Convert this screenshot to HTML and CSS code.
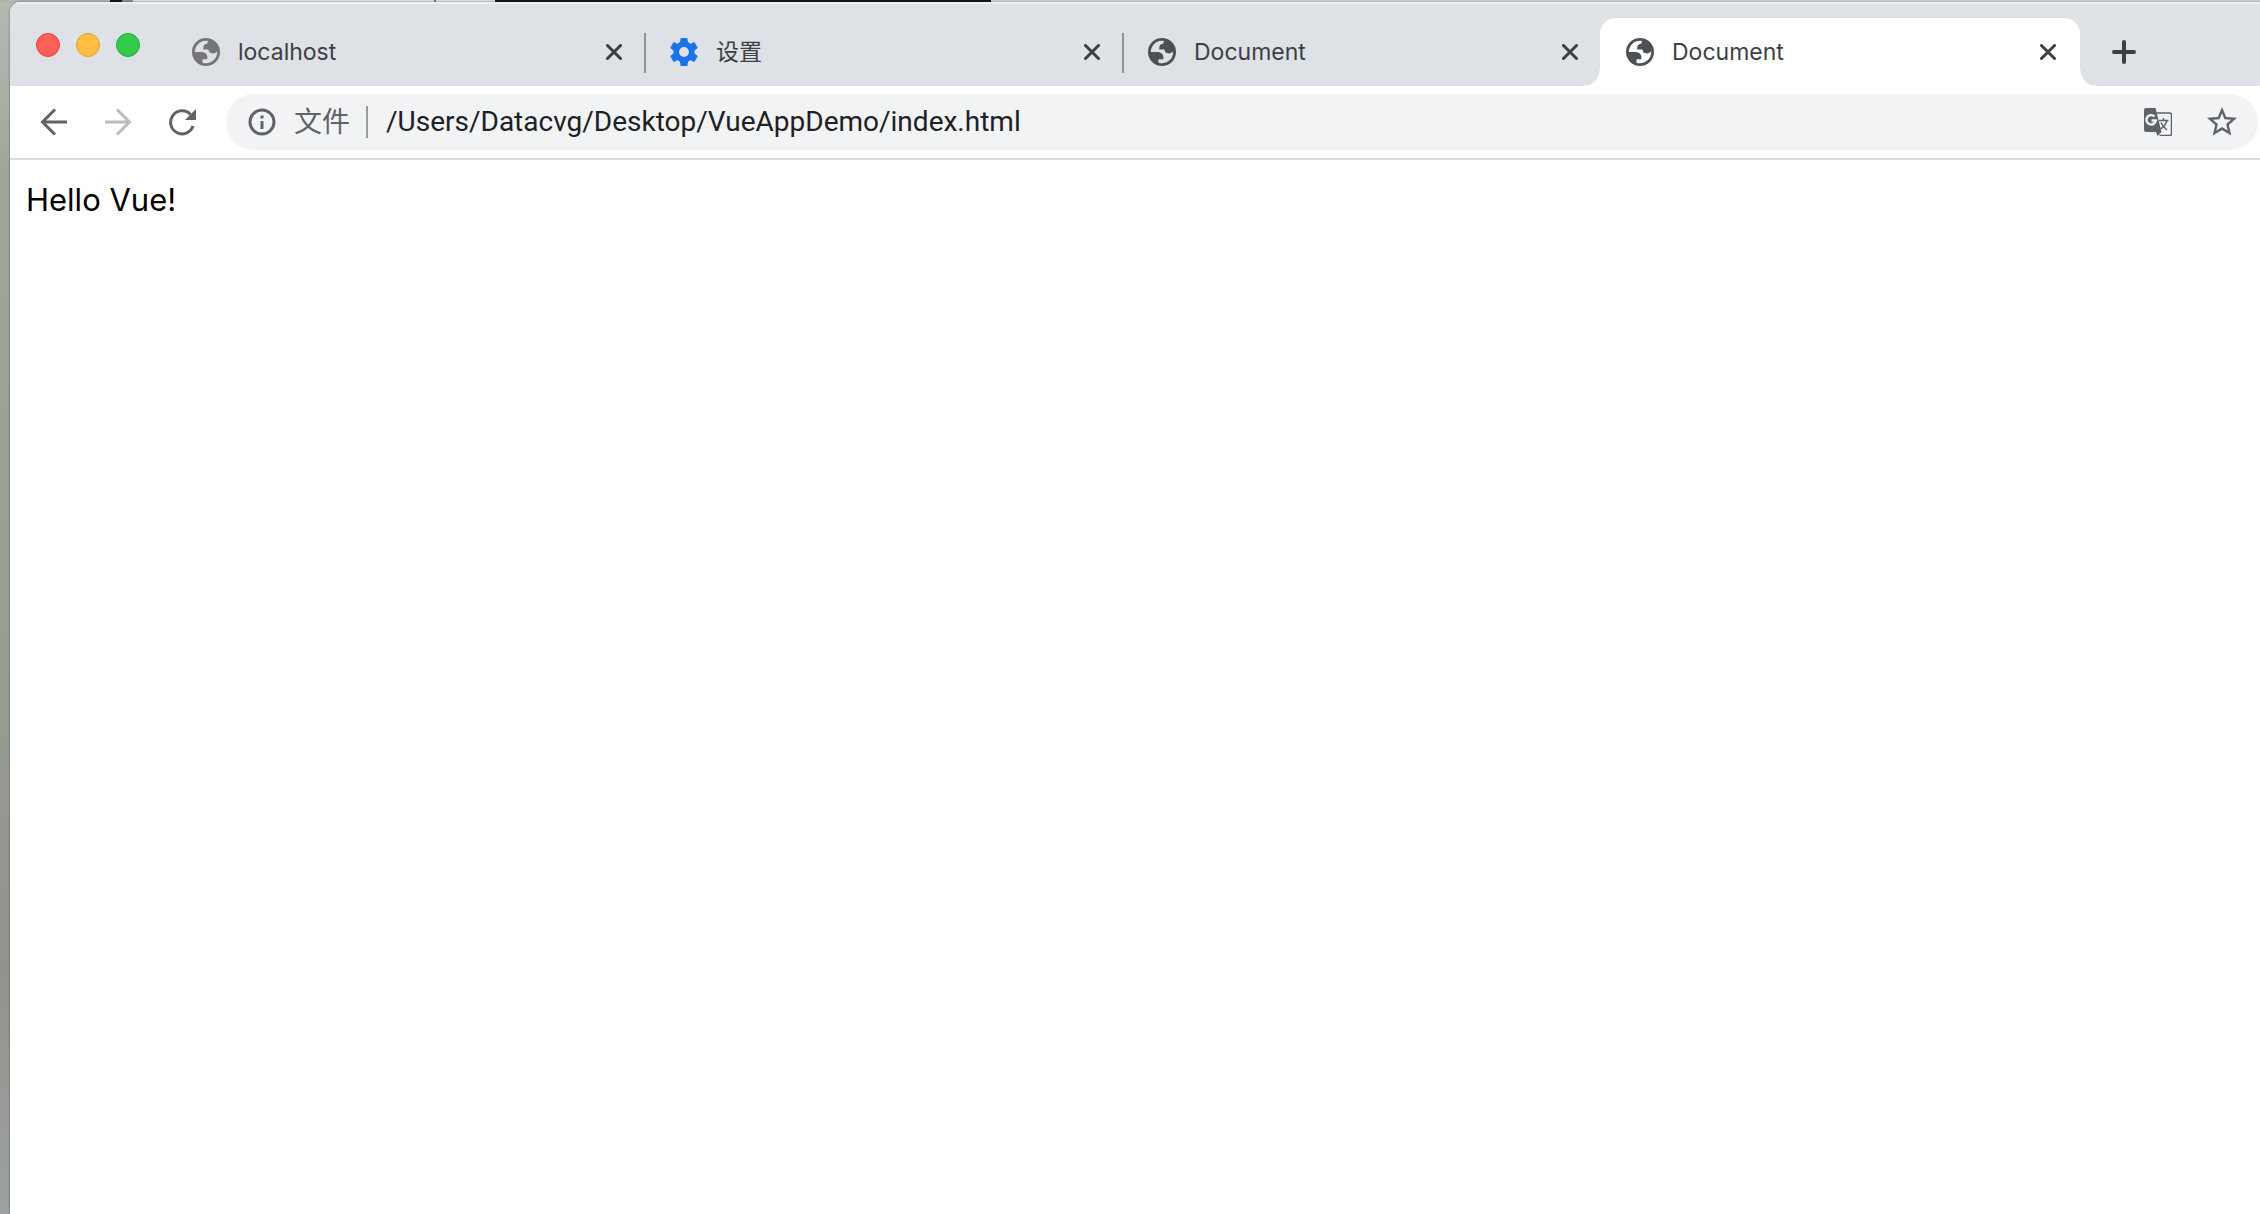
FILE: index.html
```html
<!DOCTYPE html>
<html lang="zh-CN">
<head>
  <meta charset="UTF-8">
  <meta name="viewport" content="width=device-width, initial-scale=1.0">
  <title>Document</title>
  <link rel="stylesheet" href="styles.css">
</head>
<body>

  <!-- shared icon shapes -->
  <svg class="sprite" aria-hidden="true">
    <symbol id="globe" viewBox="2 2 20 20">
      <path fill="currentColor" fill-rule="evenodd" d="M12 2a10 10 0 1 0 0 20 10 10 0 0 0 0-20zM4 12h4.400c3.407.022 4.922 1.730 4.543 5.127H9.488v2.470a8.004 8.004 0 0 0 10.498-8.083C19.327 12.504 18.332 13 17 13c-2.137 0-3.206-.916-3.206-2.750h-3.748c-.274-2.728.683-4.092 2.870-4.092 0-.975.327-1.597.811-1.970A8.004 8.004 0 0 0 4 12z"/>
    </symbol>
    <symbol id="close" viewBox="0 0 16 16">
      <path fill="none" stroke="currentColor" stroke-width="3" stroke-linecap="round" d="M1.500 1.500l13 13M14.500 1.500l-13 13"/>
    </symbol>
  </svg>

  <div class="window">
    <header class="tab-bar">
      <div class="controls">
        <button class="dot red" aria-label="关闭"></button>
        <button class="dot yellow" aria-label="最小化"></button>
        <button class="dot green" aria-label="全屏"></button>
      </div>

      <div class="tab">
        <svg class="favicon gray"><use href="#globe"/></svg>
        <span class="title">localhost</span>
        <button class="close" aria-label="关闭标签页"><svg><use href="#close"/></svg></button>
      </div>
      <div class="tab divided">
        <svg class="favicon blue" viewBox="2 2 20 20"><path fill="currentColor" d="M19.430 12.980c.04-.32.07-.64.07-.98s-.03-.66-.07-.98l2.110-1.650c.19-.15.24-.42.12-.64l-2-3.460c-.12-.22-.39-.3-.61-.22l-2.490 1c-.52-.4-1.080-.73-1.690-.98l-.38-2.650A.488.488 0 0 0 14 2h-4c-.25 0-.46.18-.49.42l-.38 2.650c-.61.25-1.170.59-1.690.98l-2.490-1c-.23-.09-.49 0-.61.22l-2 3.460c-.13.22-.07.49.12.64l2.110 1.650c-.04.32-.07.65-.07.98s.03.66.07.98l-2.110 1.650c-.19.15-.24.42-.12.64l2 3.460c.12.22.39.3.61.22l2.490-1c.52.4 1.080.73 1.690.98l.38 2.650c.03.24.24.42.49.42h4c.25 0 .46-.18.49-.42l.38-2.650c.61-.25 1.170-.59 1.690-.98l2.490 1c.23.09.49 0 .61-.22l2-3.460c.12-.22.07-.49-.12-.64l-2.110-1.650zM12 15.500c-1.930 0-3.500-1.570-3.500-3.500s1.570-3.500 3.500-3.500 3.500 1.570 3.500 3.500-1.570 3.500-3.500 3.500z"/></svg>
        <span class="title">设置</span>
        <button class="close" aria-label="关闭标签页"><svg><use href="#close"/></svg></button>
      </div>
      <div class="tab divided">
        <svg class="favicon"><use href="#globe"/></svg>
        <span class="title">Document</span>
        <button class="close" aria-label="关闭标签页"><svg><use href="#close"/></svg></button>
      </div>
      <div class="tab active">
        <svg class="favicon"><use href="#globe"/></svg>
        <span class="title">Document</span>
        <button class="close" aria-label="关闭标签页"><svg><use href="#close"/></svg></button>
      </div>

      <button class="new-tab" aria-label="新标签页">
        <svg viewBox="0 0 24 24"><path fill="none" stroke="currentColor" stroke-width="4" stroke-linecap="round" d="M12 2v20M2 12h20"/></svg>
      </button>
    </header>

    <nav class="toolbar">
      <button class="nav-btn" aria-label="后退">
        <svg viewBox="0 0 28 28"><path d="M27 14H3M15 1.500L2.500 14 15 26.500"/></svg>
      </button>
      <button class="nav-btn" aria-label="前进" disabled>
        <svg viewBox="0 0 28 28"><path d="M1 14h24M13 1.500L25.500 14 13 26.500"/></svg>
      </button>
      <button class="nav-btn" aria-label="重新加载">
        <svg viewBox="0 0 28 28"><path d="M22.500 6.500A11.500 11.500 0 1 0 25 18"/><path class="solid" d="M28 1v11H17z"/></svg>
      </button>

      <div class="address">
        <svg class="info" viewBox="0 0 28 28"><circle cx="14" cy="14" r="12" fill="none" stroke="currentColor" stroke-width="3"/><path fill="currentColor" d="M12.500 7.500h3v3h-3zM12.500 13h3v8h-3z"/></svg>
        <label class="scheme" for="url">文件</label>
        <input id="url" type="text" value="/Users/Datacvg/Desktop/VueAppDemo/index.html" spellcheck="false">
        <button class="action" aria-label="翻译此页">
          <svg viewBox="0 0 28 28">
            <path fill="none" stroke="currentColor" stroke-width="1.500" d="M12 5h13.500a2 2 0 0 1 2 2v18.500a2 2 0 0 1-2 2H15.500"/>
            <path fill="currentColor" d="M2 0h9.500l6 24-4 4-1.500-4H2a2 2 0 0 1-2-2V2a2 2 0 0 1 2-2z"/>
            <path fill="none" stroke="#f1f3f4" stroke-width="2.400" d="M10.500 8.500A4.700 4.700 0 1 0 11.800 12.500H7.500"/>
            <path fill="none" stroke="currentColor" stroke-width="1.500" d="M15 12.500h9.500M19.500 10v2.500M23 12.500c-1 4-3.500 6.500-6.500 8.500M17 14.500c1.500 3.500 3.500 5.500 6 7.500"/>
          </svg>
        </button>
        <button class="action star" aria-label="为此标签页添加书签">
          <svg viewBox="2 2 20 20"><path fill="currentColor" d="M22 9.240l-7.190-.62L12 2 9.190 8.630 2 9.240l5.460 4.730L5.820 21 12 17.270 18.180 21l-1.630-7.030L22 9.240zM12 15.400l-3.760 2.270 1-4.280-3.320-2.880 4.380-.38L12 6.100l1.710 4.040 4.380.38-3.320 2.880 1 4.280L12 15.400z"/></svg>
        </button>
      </div>
    </nav>

    <main id="app">Hello Vue!</main>
  </div>

</body>
</html>
```

FILE: styles.css
```css
* {
  box-sizing: border-box;
}

body {
  font-family: Inter, "Noto Sans CJK SC", sans-serif;
  margin: 0;
  padding: 2px 0 0 10px;
  /* strip of the windows behind, then the wallpaper */
  background:
    linear-gradient(90deg, #b0b3ad 110px, #161616 110px, #161616 122px, #8d8e8d 122px, #8d8e8d 133px, #dededb 133px, #dededb 434px, #777 434px, #777 436px, #dededb 436px, #dededb 495px, #161616 495px, #161616 991px, #d3d3d0 991px) 0 0 / 100% 2px no-repeat,
    linear-gradient(#b5b9b1, #9fa59d 15%, #969b94 60%, #92938e 80%, #9ca19d);
}

button {
  padding: 0;
  border: none;
  background: none;
  color: inherit;
  display: flex;
  align-items: center;
  justify-content: center;
}

.sprite {
  display: none;
}

.window {
  min-height: calc(100vh - 2px);
  background-color: #fff;
  border-top-left-radius: 10px;
  box-shadow: 0 0 2px rgba(0, 0, 0, 0.6);
  overflow: hidden;
}

/* Tabs */
.tab-bar {
  display: flex;
  height: 84px;
  padding-top: 16px;
  background-color: #dee1e6;
  box-shadow: inset 0 2px 1px #eef0f1;
  color: #3c4043;
}

.controls {
  display: flex;
  gap: 16px;
  width: 156px;
  padding: 15px 0 0 26px;
}

.dot {
  width: 24px;
  height: 24px;
  border-radius: 50%;
}

.red {
  background-color: #ff5f5a;
  border: 1px solid #e2463f;
}

.yellow {
  background-color: #ffbe3f;
  border: 1px solid #dfa033;
}

.green {
  background-color: #33cc48;
  border: 1px solid #24ab35;
}

.tab {
  position: relative;
  display: flex;
  align-items: center;
  flex: 0 1 478px;
  padding: 0 12px 0 26px;
}

.divided::before {
  content: "";
  position: absolute;
  left: 0;
  top: 15px;
  width: 2px;
  height: 40px;
  background-color: #8e9195;
}

.active {
  flex-basis: 480px;
  padding-right: 14px;
  background-color: #fff;
  border-radius: 16px 16px 0 0;
}

/* curved feet of the active tab */
.active::before,
.active::after {
  content: "";
  position: absolute;
  bottom: 0;
  width: 16px;
  height: 16px;
}

.active::before {
  right: 100%;
  background: radial-gradient(circle at 0 0, transparent 15px, #fff 16px);
}

.active::after {
  left: 100%;
  background: radial-gradient(circle at 100% 0, transparent 15px, #fff 16px);
}

.favicon {
  width: 28px;
  height: 28px;
  color: #4d5156;
}

.gray {
  color: #757575;
}

.blue {
  color: #1a73e8;
}

.title {
  flex: 1;
  margin-left: 18px;
  font-size: 23px;
  line-height: 32px;
}

.close {
  width: 36px;
  height: 36px;
}

.close svg {
  width: 16px;
  height: 16px;
}

.new-tab {
  width: 56px;
  height: 68px;
  margin-left: 16px;
}

.new-tab svg {
  width: 24px;
  height: 24px;
}

/* Toolbar */
.toolbar {
  display: flex;
  height: 74px;
  padding: 8px 2px 8px 12px;
  border-bottom: 2px solid #dadce0;
  color: #5f6368;
}

.nav-btn {
  width: 64px;
  height: 56px;
}

.nav-btn svg {
  width: 28px;
  height: 28px;
  fill: none;
  stroke: currentColor;
  stroke-width: 3;
}

.nav-btn .solid {
  fill: currentColor;
  stroke: none;
}

.nav-btn:disabled {
  color: #babcbe;
}

.address {
  display: flex;
  flex: 1;
  align-items: center;
  height: 56px;
  margin-left: 12px;
  padding: 0 4px 0 22px;
  background-color: #f1f3f4;
  border-radius: 28px;
}

.info {
  width: 28px;
  height: 28px;
}

.scheme {
  margin-left: 18px;
  padding-right: 16px;
  border-right: 2px solid #9a9da0;
  font-size: 28px;
  line-height: 32px;
}

.address input {
  flex: 1;
  min-width: 0;
  padding: 0 0 0 18px;
  border: none;
  outline: none;
  background: none;
  color: #202124;
  font-family: Roboto, sans-serif;
  font-size: 28px;
  line-height: 36px;
}

.action {
  width: 64px;
  height: 56px;
}

.action svg {
  width: 28px;
  height: 28px;
}

.star svg {
  width: 30px;
  height: 30px;
}

/* Page */
#app {
  padding: 20px 16px;
  color: #000;
  font-size: 31px;
  line-height: 40px;
}
```
